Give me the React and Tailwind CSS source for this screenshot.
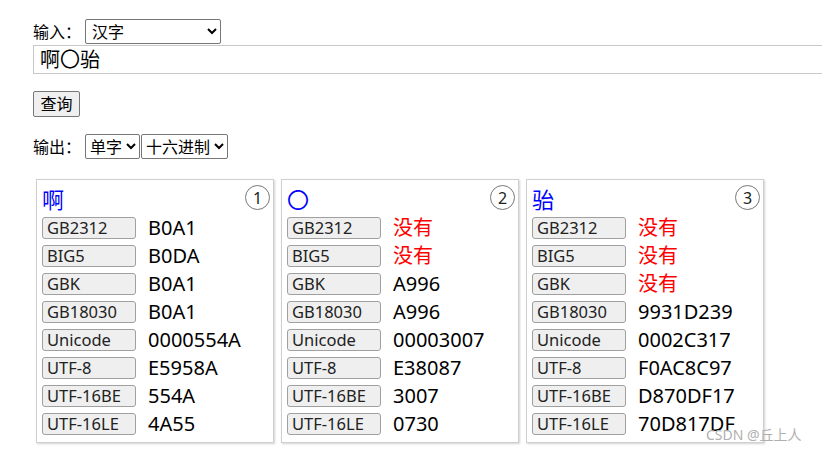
import React from "react";

const FONT = '"Noto Sans", "Noto Sans CJK SC", sans-serif';

const cards = [
  {
    ch: "啊",
    n: 1,
    rows: [
      ["GB2312", "B0A1"],
      ["BIG5", "B0DA"],
      ["GBK", "B0A1"],
      ["GB18030", "B0A1"],
      ["Unicode", "0000554A"],
      ["UTF-8", "E5958A"],
      ["UTF-16BE", "554A"],
      ["UTF-16LE", "4A55"],
    ],
  },
  {
    ch: "〇",
    n: 2,
    rows: [
      ["GB2312", null],
      ["BIG5", null],
      ["GBK", "A996"],
      ["GB18030", "A996"],
      ["Unicode", "00003007"],
      ["UTF-8", "E38087"],
      ["UTF-16BE", "3007"],
      ["UTF-16LE", "0730"],
    ],
  },
  {
    ch: "骀",
    n: 3,
    rows: [
      ["GB2312", null],
      ["BIG5", null],
      ["GBK", null],
      ["GB18030", "9931D239"],
      ["Unicode", "0002C317"],
      ["UTF-8", "F0AC8C97"],
      ["UTF-16BE", "D870DF17"],
      ["UTF-16LE", "70D817DF"],
    ],
  },
];

function Card({ ch, n, rows }) {
  return (
    <div className="w-[238px] h-[264px] border border-[#cfcfcf] shadow-[1px_1px_2px_rgba(0,0,0,0.18)] bg-white pl-[5px] pr-[3px] pt-[4px]">
      <div className="flex items-start justify-between h-[33px]">
        <span className="text-[22px] leading-[28px] text-[#0000ff] mt-[1px]">{ch}</span>
        <span className="w-[25px] h-[25px] rounded-full border border-[#777] flex items-center justify-center text-[16px] leading-none text-[#222] mt-[1px]">
          {n}
        </span>
      </div>
      <div className="flex flex-col gap-[6px]">
        {rows.map(([label, val]) => (
          <div key={label} className="flex items-center h-[22px]">
            <div className="w-[94px] h-[22px] border border-[#a0a0a0] rounded-[3px] bg-[#efefef] text-[16.5px] leading-[19px] pl-[4px] text-[#222]">
              {label}
            </div>
            {val ? (
              <span className="ml-[12px] text-[20px] leading-none text-black">{val}</span>
            ) : (
              <span className="ml-[12px] text-[20px] leading-none text-[#ff0000]">没有</span>
            )}
          </div>
        ))}
      </div>
    </div>
  );
}

export default function App() {
  return (
    <div className="relative w-[822px] h-[451px] overflow-hidden bg-white text-black" style={{ fontFamily: FONT }}>
      <div className="pl-[33px] pt-[19px]">
        <div className="flex items-center h-[25px]">
          <span className="w-[52px] text-[16px]">输入：</span>
          <select className="w-[136px] h-[25px] border border-[#767676] rounded-[2px] text-[16px] px-[2px] bg-white">
            <option>汉字</option>
          </select>
        </div>
        <div className="mt-[1px] w-[800px] h-[29px] border border-[#c8c8c8] flex items-center pl-[6px] text-[20px]">
          啊〇骀
        </div>
        <div className="mt-[17px]">
          <button className="w-[47px] h-[26px] border border-[#767676] rounded-[2px] bg-[#efefef] text-[16px] leading-none">
            查询
          </button>
        </div>
        <div className="mt-[17px] flex items-center h-[25px]">
          <span className="w-[52px] text-[16px]">输出：</span>
          <select className="w-[55px] h-[25px] border border-[#767676] rounded-[2px] text-[16px] bg-white">
            <option>单字</option>
          </select>
          <select className="ml-[1px] w-[87px] h-[25px] border border-[#767676] rounded-[2px] text-[16px] bg-white">
            <option>十六进制</option>
          </select>
        </div>
        <div className="mt-[20px] ml-[3px] flex gap-[7px]">
          {cards.map((c) => (
            <Card key={c.n} {...c} />
          ))}
        </div>
      </div>
      <div className="absolute left-[706px] top-[424px] text-[14px] text-[#b0b0b0]">CSDN @丘上人</div>
    </div>
  );
}
